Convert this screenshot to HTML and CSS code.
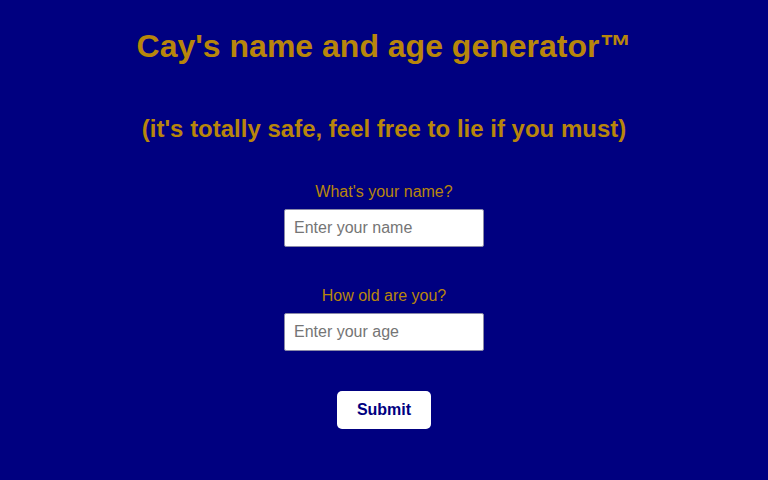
FILE: index.html
```html
<!DOCTYPE html>
<html>
<head>
<meta charset="utf-8">
<link rel="stylesheet" href="styles.css">
</head>
<body>
<main class="page">
  <h1 class="title">Cay's name and age generator™</h1>
  <h2 class="subtitle">(it's totally safe, feel free to lie if you must)</h2>
  <form class="form">
    <div class="field">
      <label class="label" for="name">What's your name?</label>
      <input class="input" id="name" type="text" placeholder="Enter your name">
    </div>
    <div class="field">
      <label class="label" for="age">How old are you?</label>
      <input class="input" id="age" type="text" placeholder="Enter your age">
    </div>
    <button class="submit" type="button">Submit</button>
  </form>
</main>
</body>
</html>
```
FILE: styles.css
```css
html, body {
  margin: 0;
  padding: 0;
  background: #000080;
  height: 100%;
}
body {
  font-family: "Liberation Sans", Arial, sans-serif;
  color: #b8860b;
}
.page {
  display: flex;
  flex-direction: column;
  align-items: center;
  padding-top: 28px;
}
.title {
  margin: 0;
  font-size: 32px;
  line-height: 37px;
  font-weight: bold;
}
.subtitle {
  margin: 50px 0 0;
  font-size: 24px;
  line-height: 28px;
  font-weight: bold;
}
.form {
  margin-top: 40px;
  display: flex;
  flex-direction: column;
  align-items: center;
  gap: 40px;
}
.field {
  display: flex;
  flex-direction: column;
  align-items: center;
  gap: 8px;
}
.label {
  font-size: 16px;
  line-height: 18px;
}
.input {
  box-sizing: border-box;
  width: 200px;
  height: 38px;
  padding: 0 9px;
  border: 1px solid #8a8aa8;
  border-radius: 2px;
  background: #fff;
  font-family: "Liberation Sans", Arial, sans-serif;
  font-size: 16px;
  color: #000;
  margin: 0;
}
.input::placeholder {
  color: #757575;
}
.submit {
  box-sizing: border-box;
  width: 94px;
  height: 38px;
  border: none;
  border-radius: 5px;
  background: #fff;
  color: #000080;
  font-family: "Liberation Sans", Arial, sans-serif;
  font-size: 16px;
  font-weight: bold;
  cursor: pointer;
}
```
